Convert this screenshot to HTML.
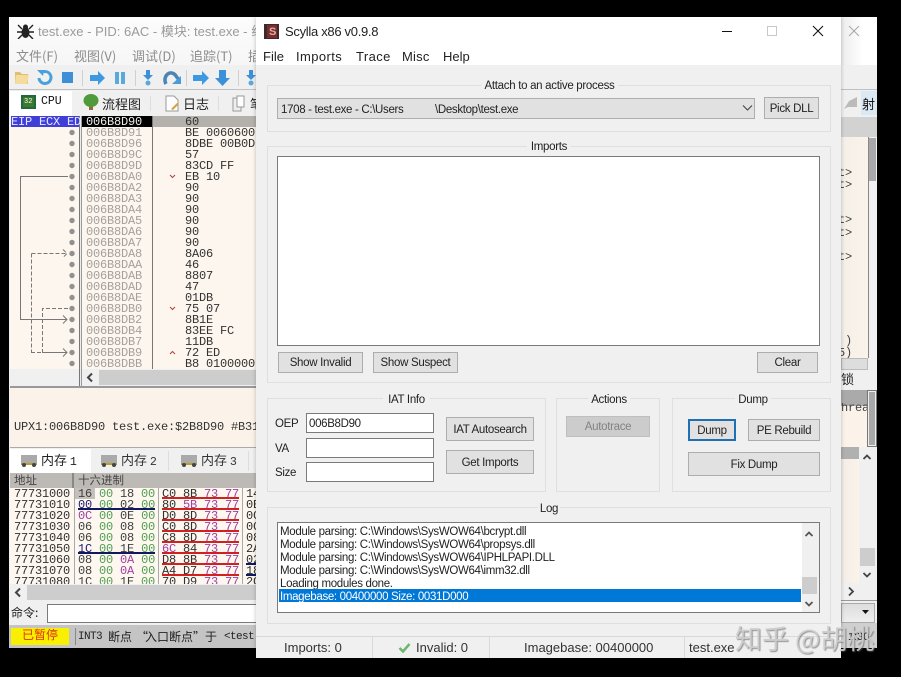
<!DOCTYPE html>
<html><head><meta charset="utf-8">
<style>
html,body{margin:0;padding:0;background:#000;width:901px;height:677px;overflow:hidden}
*{box-sizing:border-box}
div,span.t,svg.a{position:absolute}
.t{position:absolute;white-space:nowrap;height:16px;font:12px/16px "Liberation Sans","Noto Sans CJK SC",sans-serif;color:#222}
.s{font-size:11.5px;letter-spacing:-.33px;margin-top:1px}
.m{font-family:"Liberation Mono","Noto Sans CJK SC",monospace}
pre{position:absolute;margin:0;font:12px/11px "Liberation Mono",monospace;letter-spacing:-.2px;white-space:pre}
.cn{font:13px/16px "Noto Sans CJK SC","Liberation Sans",sans-serif;color:#8c8c8c}
.g{border:1px solid #dfdfdf;position:absolute}
.lb{position:absolute;background:#f0f0f0;padding:0;text-align:center;height:14px;font:11.5px/16px "Liberation Sans",sans-serif;letter-spacing:-.3px;color:#222;white-space:nowrap}
.b{position:absolute;background:#e1e1e1;border:1px solid #adadad;padding-top:1px;text-align:center;font:11.5px/18px "Liberation Sans",sans-serif;letter-spacing:-.3px;color:#222;white-space:nowrap}
.i{position:absolute;background:#fff;border:1px solid #7a7a7a}
.r{position:absolute;height:2px;background:#d02020;left:162px;width:77px}
.n{position:absolute;height:2px;background:#101860;left:78px;width:77px}
.p{color:#a040a0}.e{color:#50a050}.u{color:#202070}
.z{font-family:"Noto Sans CJK SC",sans-serif;font-size:13px}
</style></head>
<body>

<!-- back window -->
<div style="left:9px;top:17px;width:868px;height:631px;background:#f0f0f0;overflow:hidden">
  <div style="left:0;top:0;width:868px;height:48px;background:linear-gradient(#fcfcfc,#f6f6f6)"></div>
  <div style="left:0;top:48px;width:868px;height:25px;background:#f0f0f0;border-bottom:1px solid #c0c0c0"></div>
</div>
<div style="left:841px;top:17px;width:36px;height:48px;background:linear-gradient(90deg,#ececec,#ffffff 60%)"></div>

<!-- bug icon -->
<svg class="a" style="left:17px;top:24px" width="17" height="15" viewBox="0 0 17 15"><ellipse cx="8.5" cy="8.500" rx="4" ry="5.500" fill="#222"/><circle cx="8.500" cy="3" r="2.500" fill="#222"/><path d="M1 1l4 4M16 1l-4 4M0 8h5M17 8h-5M1 15l4-4M16 15l-4-4" stroke="#222" stroke-width="1.400" fill="none"/></svg>
<span class="t" style="left:38px;top:24px;font-size:13px;color:#9a9a9a">test.exe - PID: 6AC - 模块: test.exe - 线</span>
<span class="t cn" style="left:16px;top:48px">文件(F)</span>
<span class="t cn" style="left:74px;top:48px">视图(V)</span>
<span class="t cn" style="left:132px;top:48px">调试(D)</span>
<span class="t cn" style="left:190px;top:48px">追踪(T)</span>
<span class="t cn" style="left:248px;top:48px">插</span>

<!-- toolbar icons -->
<svg class="a" style="left:14px;top:69px" width="242" height="18" viewBox="0 0 242 18">
<path d="M1 3h5l2 2h6v10H1z" fill="#e0c070"/><path d="M2 6h13l-2 9H1z" fill="#f3dc9c"/>
<path d="M25 9a6 6 0 1 0 2-5" stroke="#4aa0dc" stroke-width="3" fill="none"/><path d="M23 1l7 0-1 6z" fill="#4aa0dc"/>
<rect x="48" y="3" width="11" height="11" fill="#3d8fd8"/>
<rect x="68" y="1" width="1" height="16" fill="#d0d0d0"/>
<path d="M76 6h8V2l7 7-7 7v-4h-8z" fill="#3d9ae0"/>
<rect x="101" y="3" width="4" height="12" fill="#5aa8dc"/><rect x="107" y="3" width="4" height="12" fill="#5aa8dc"/>
<rect x="121" y="1" width="1" height="16" fill="#d0d0d0"/>
<path d="M132 1h4v5h3l-5 5-5-5h3z" fill="#3d8fd8"/><circle cx="134" cy="14" r="2.500" fill="#5aa8dc"/>
<path d="M152 15a6 7 0 0 1 10-8l3 4" stroke="#4a85b5" stroke-width="3.500" fill="none"/><path d="M158 15h9v-8z" fill="#4a9ad8"/>
<rect x="172" y="1" width="1" height="16" fill="#d0d0d0"/>
<path d="M179 6h9V2l7 7-7 7v-4h-9z" fill="#3d9ae0"/>
<path d="M205 1h7v8h4l-7.500 8L201 9h4z" fill="#3d8fd8"/>
<rect x="224" y="1" width="1" height="16" fill="#d0d0d0"/>
<path d="M235 1h4v5h3l-5 5-5-5h3z" fill="#3d8fd8"/><circle cx="237" cy="14" r="2.500" fill="#5aa8dc"/>
</svg>

<!-- tabs -->
<div style="left:10px;top:91px;width:62px;height:25px;background:#fff"></div>
<div style="left:21px;top:95px;width:15px;height:14px;background:#3c7a2c;border:2px solid #264;"></div>
<span class="t m" style="left:24px;top:94px;font-size:7px;color:#fff">32</span>
<span class="t m" style="left:41px;top:94px;font-size:11.5px;color:#111;">CPU</span>
<svg class="a" style="left:83px;top:94px" width="16" height="17" viewBox="0 0 16 17"><rect x="6" y="10" width="4" height="6" fill="#9a6a3a"/><ellipse cx="8" cy="6.500" rx="7.500" ry="6.500" fill="#4f9a3a"/></svg>
<span class="t z" style="left:102px;top:96px">流程图</span>
<svg class="a" style="left:165px;top:95px" width="15" height="17" viewBox="0 0 15 17"><path d="M1 1h8l4 4v11H1z" fill="#fff" stroke="#999"/><path d="M6 14l6-6 2 1-6 6z" fill="#d8a040"/></svg>
<span class="t z" style="left:183px;top:96px">日志</span>
<svg class="a" style="left:232px;top:95px" width="15" height="17" viewBox="0 0 15 17"><path d="M1 3h8v13H1z" fill="#eee" stroke="#999"/><path d="M5 1h7v11H5z" fill="#fff" stroke="#999"/></svg>
<span class="t z" style="left:250px;top:96px">笔</span>
<div style="left:150px;top:96px;width:1px;height:15px;background:#ddd"></div>
<div style="left:218px;top:96px;width:1px;height:15px;background:#ddd"></div>

<!-- CPU pane -->
<div style="left:10px;top:116px;width:70px;height:253px;background:#fdf6ee"></div>
<div style="left:79px;top:116px;width:1px;height:270px;background:#777"></div>
<div style="left:80px;top:116px;width:2px;height:270px;background:#ededed"></div>
<div style="left:81px;top:116px;width:1px;height:270px;background:#999"></div>
<div style="left:82px;top:116px;width:175px;height:253px;background:#fdf6ee"></div>
<div style="left:152px;top:116px;width:1px;height:253px;background:#777"></div>
<div style="left:11px;top:116px;width:68px;height:11px;background:#3f3fd8"></div>
<pre style="left:11px;top:117px;color:#e8e8ff">EIP ECX ED</pre>
<div style="left:82px;top:116px;width:70px;height:11px;background:#000"></div>
<div style="left:153px;top:116px;width:104px;height:11px;background:#b4b0ac"></div>
<pre style="left:86px;top:117px;color:#a4a09c"><span style="color:#eee">006B8D90</span>
006B8D91
006B8D96
006B8D9C
006B8D9D
006B8DA0
006B8DA2
006B8DA3
006B8DA4
006B8DA5
006B8DA6
006B8DA7
006B8DA8
006B8DAA
006B8DAB
006B8DAD
006B8DAE
006B8DB0
006B8DB2
006B8DB4
006B8DB7
006B8DB9
006B8DBB</pre>
<pre style="left:185px;top:117px;color:#333;width:71px;overflow:hidden;height:252px">60
BE 0060600
8DBE 00B0D
57
83CD FF
EB 10
90
90
90
90
90
90
8A06
46
8807
47
01DB
75 07
8B1E
83EE FC
11DB
72 ED
B8 0100000</pre>
<svg class="a" style="left:169px;top:174px" width="7" height="5"><path d="M1 1l2.500 2.500L6 1" stroke="#b04040" fill="none"/></svg>
<svg class="a" style="left:169px;top:306px" width="7" height="5"><path d="M1 1l2.500 2.500L6 1" stroke="#b04040" fill="none"/></svg>
<svg class="a" style="left:169px;top:350px" width="7" height="5"><path d="M1 4l2.500-2.500L6 4" stroke="#b04040" fill="none"/></svg>
<!-- dots and arrows -->
<svg class="a" style="left:10px;top:116px" width="70" height="253" viewBox="0 0 70 253">
<g fill="#919191"><circle cx="62" cy="16.500" r="2.700"/><circle cx="62" cy="27.500" r="2.700"/><circle cx="62" cy="38.500" r="2.700"/><circle cx="62" cy="49.500" r="2.700"/><circle cx="62" cy="60.500" r="2.700"/><circle cx="62" cy="71.500" r="2.700"/><circle cx="62" cy="82.500" r="2.700"/><circle cx="62" cy="93.500" r="2.700"/><circle cx="62" cy="104.500" r="2.700"/><circle cx="62" cy="115.500" r="2.700"/><circle cx="62" cy="126.500" r="2.700"/><circle cx="62" cy="137.500" r="2.700"/><circle cx="62" cy="148.500" r="2.700"/><circle cx="62" cy="159.500" r="2.700"/><circle cx="62" cy="170.500" r="2.700"/><circle cx="62" cy="181.500" r="2.700"/><circle cx="62" cy="192.500" r="2.700"/><circle cx="62" cy="203.500" r="2.700"/><circle cx="62" cy="214.500" r="2.700"/><circle cx="62" cy="225.500" r="2.700"/><circle cx="62" cy="236.500" r="2.700"/><circle cx="62" cy="247.500" r="2.700"/></g>
<g fill="none" stroke="#777" stroke-width="1">
<path d="M58 60.500H10.500V203.500H57M53 199.500l4 4-4 4"/>
<path d="M21.500 137.500H57M53 133.500l4 4-4 4" stroke-dasharray="4 2"/>
<path d="M21.500 137.500V236.500" stroke-dasharray="4 2"/>
<path d="M58 192.500H32.500V236" stroke-dasharray="4 2"/>
<path d="M21 236.500H32" stroke-dasharray="4 2"/>
<path d="M32 236.500H57M53 232.500l4 4-4 4"/>
</g></svg>
<!-- CPU hscroll -->
<div style="left:82px;top:369px;width:175px;height:17px;background:#f0f0f0"></div>
<div style="left:99px;top:370px;width:158px;height:15px;background:#cdcdcd"></div>
<svg class="a" style="left:85px;top:372px" width="10" height="11"><path d="M7 1.500L3 5.500l4 4" stroke="#444" stroke-width="2" fill="none"/></svg>
<div style="left:10px;top:386px;width:247px;height:2px;background:#999"></div>

<!-- info pane -->
<div style="left:10px;top:388px;width:247px;height:60px;background:#fbf3ea"></div>
<pre style="left:14px;top:422px;color:#333;width:243px;overflow:hidden">UPX1:006B8D90 test.exe:$2B8D90 #B31</pre>
<div style="left:10px;top:447px;width:247px;height:1px;background:#aaa"></div>

<!-- memory tabs -->
<div style="left:10px;top:449px;width:81px;height:24px;background:#fff"></div>
<svg class="a" style="left:21px;top:454px" width="16" height="13" viewBox="0 0 16 13"><rect y="1" width="16" height="8" fill="#aaa"/><rect y="9" width="16" height="2" fill="#b8a030"/><circle cx="3" cy="11" r="2" fill="#444"/><circle cx="13" cy="11" r="2" fill="#444"/></svg>
<span class="t z" style="left:41px;top:452px">内存 <span style="font:11.670px 'Liberation Mono'">1</span></span>
<svg class="a" style="left:101px;top:454px" width="16" height="13" viewBox="0 0 16 13"><rect y="1" width="16" height="8" fill="#aaa"/><rect y="9" width="16" height="2" fill="#b8a030"/><circle cx="3" cy="11" r="2" fill="#444"/><circle cx="13" cy="11" r="2" fill="#444"/></svg>
<span class="t z" style="left:121px;top:452px;color:#333">内存 <span style="font:11.670px 'Liberation Mono'">2</span></span>
<svg class="a" style="left:181px;top:454px" width="16" height="13" viewBox="0 0 16 13"><rect y="1" width="16" height="8" fill="#aaa"/><rect y="9" width="16" height="2" fill="#b8a030"/><circle cx="3" cy="11" r="2" fill="#444"/><circle cx="13" cy="11" r="2" fill="#444"/></svg>
<span class="t z" style="left:201px;top:452px;color:#333">内存 <span style="font:11.670px 'Liberation Mono'">3</span></span>
<div style="left:168px;top:451px;width:1px;height:20px;background:#ddd"></div>
<div style="left:248px;top:451px;width:1px;height:20px;background:#ddd"></div>

<!-- dump header -->
<div style="left:10px;top:473px;width:247px;height:15px;background:#bdbab6"></div>
<div style="left:72px;top:473px;width:2px;height:15px;background:#888"></div>
<span class="t z" style="left:14px;top:472px;font-size:11.5px;color:#444">地址</span>
<span class="t z" style="left:78px;top:472px;font-size:11.5px;color:#444">十六进制</span>
<!-- dump rows -->
<div style="left:10px;top:488px;width:247px;height:96px;background:#fdf7f0;overflow:hidden">
<div style="left:64px;top:0;width:1px;height:96px;background:#aaa"></div>
<div style="left:148px;top:0;width:1px;height:96px;background:#aaa"></div>
<div style="left:232px;top:0;width:1px;height:96px;background:#aaa"></div>
<div style="left:65px;top:0;width:20px;height:11px;background:#c4c0bc"></div>
<pre style="left:4px;top:1px;color:#333">77731000
77731010
77731020
77731030
77731040
77731050
77731060
77731070
77731080</pre>
<pre style="left:68px;top:1px;color:#404040">16 <span class="e">00</span> 18 <span class="e">00</span>
<span class="u">00</span> <span class="e">00</span> 02 <span class="e">00</span>
<span class="p">0C</span> <span class="e">00</span> 0E <span class="e">00</span>
06 <span class="e">00</span> 08 <span class="e">00</span>
06 <span class="e">00</span> 08 <span class="e">00</span>
<span class="u">1C</span> <span class="e">00</span> 1E <span class="e">00</span>
08 <span class="e">00</span> <span class="p">0A</span> <span class="e">00</span>
08 <span class="e">00</span> <span class="p">0A</span> <span class="e">00</span>
1C <span class="e">00</span> 1E <span class="e">00</span></pre>
<pre style="left:152px;top:1px;color:#303030">C0 8B <span class="p">73 77</span>
80 <span class="p">5B 73 77</span>
D0 8D <span class="p">73 77</span>
C0 8D <span class="p">73 77</span>
C8 8D <span class="p">73 77</span>
<span class="p">6C</span> 84 <span class="p">73 77</span>
D8 8B <span class="p">73 77</span>
A4 D7 <span class="p">73 77</span>
70 D9 <span class="p">73 77</span></pre>
<pre style="left:236px;top:1px;color:#303030">14
0E
0C
0C
08
2A
02
18
2C</pre>
</div>
<div class="r" style="top:497px"></div><div class="r" style="top:508px"></div><div class="r" style="top:519px"></div><div class="r" style="top:530px"></div><div class="r" style="top:541px"></div><div class="r" style="top:552px"></div><div class="r" style="top:563px"></div><div class="r" style="top:574px"></div>
<div class="n" style="top:508px"></div><div class="n" style="top:552px"></div>
<div class="n" style="top:563px;left:246px;width:10px"></div><div class="n" style="top:574px;left:246px;width:10px"></div>
<!-- dump hscroll -->
<div style="left:10px;top:584px;width:247px;height:17px;background:#f0f0f0"></div>
<div style="left:27px;top:585px;width:230px;height:15px;background:#cdcdcd"></div>
<svg class="a" style="left:13px;top:587px" width="10" height="11"><path d="M7 1.500L3 5.500l4 4" stroke="#444" stroke-width="2" fill="none"/></svg>
<!-- command -->
<div style="left:10px;top:601px;width:247px;height:25px;background:#f0f0f0"></div>
<span class="t z" style="left:11px;top:605px;font-size:12px">命令:</span>
<div class="i" style="left:47px;top:604px;width:210px;height:19px"></div>
<!-- status -->
<div style="left:9px;top:625px;width:248px;height:23px;background:#c4c4c4"></div>
<div style="left:11px;top:628px;width:58px;height:17px;background:#f8f000"></div>
<span class="t z" style="left:22px;top:627px;font-size:12px;color:#e03010">已暂停</span>
<div style="left:75px;top:628px;width:1px;height:17px;background:#888"></div>
<span class="t m" style="left:78px;top:629px;font-size:11px;letter-spacing:-.6px">INT3</span>
<span class="t z" style="left:108px;top:629px;font-size:12px">断点</span>
<span class="t z" style="left:136px;top:629px;font-size:12px">“</span>
<span class="t z" style="left:145px;top:629px;font-size:12px">入口断点</span>
<span class="t z" style="left:193px;top:629px;font-size:12px">”</span>
<span class="t z" style="left:205px;top:629px;font-size:12px">于</span>
<span class="t m" style="left:224px;top:629px;font-size:11px;letter-spacing:-.6px">&lt;test.</span>

<!-- right side pieces -->
<svg class="a" style="left:848px;top:25px" width="12" height="12"><path d="M1 1l10 10M11 1L1 11" stroke="#aaa" stroke-width="1.100"/></svg>
<div style="left:841px;top:91px;width:36px;height:25px;background:#f0f0f0"></div>
<svg class="a" style="left:843px;top:96px" width="15" height="14"><path d="M1 13L6 5l8-4v10H5z" fill="#bbb"/></svg>
<div style="left:861px;top:91px;width:16px;height:24px;background:#dbe9f5"></div>
<span class="t z" style="left:862px;top:96px;color:#111;width:15px;overflow:hidden">射</span>
<div style="left:841px;top:117px;width:36px;height:20px;background:#d2d2d2"></div>
<div style="left:841px;top:137px;width:27px;height:221px;background:linear-gradient(90deg,#f4efe8,#fbf3ea)"></div>
<div style="left:868px;top:137px;width:9px;height:221px;background:#f0f0f0;border-left:1px solid #888"></div>
<div style="left:869px;top:138px;width:7px;height:43px;background:#a8a8a8"></div>
<pre style="left:838px;top:168px;color:#444">t&gt;</pre>
<pre style="left:838px;top:180px;color:#444">t&gt;</pre>
<pre style="left:838px;top:215px;color:#444">t&gt;</pre>
<pre style="left:838px;top:228px;color:#444">t&gt;</pre>
<pre style="left:838px;top:252px;color:#444">t&gt;</pre>
<pre style="left:838px;top:336px;color:#444"> )</pre>
<pre style="left:838px;top:348px;color:#444">5)</pre>
<div style="left:841px;top:358px;width:27px;height:12px;background:#ddd;border:1px solid #bbb"></div>
<div style="left:841px;top:370px;width:36px;height:20px;background:#f0f0f0"></div>
<span class="t z" style="left:841px;top:371px">锁</span>
<div style="left:841px;top:390px;width:27px;height:16px;background:#aaa"></div>
<div style="left:841px;top:406px;width:27px;height:41px;background:#fbf3ea"></div>
<pre style="left:841px;top:403px;color:#444;width:26px;overflow:hidden">hrea</pre>
<div style="left:867px;top:390px;width:10px;height:57px;background:#a8a8a8;border:1px solid #777;outline:1px solid #eee;outline-offset:-2px"></div>
<div style="left:841px;top:447px;width:36px;height:144px;background:#f0f0f0"></div>
<div style="left:841px;top:447px;width:18px;height:12px;background:#b0b0b0"></div>
<div style="left:841px;top:459px;width:18px;height:124px;background:linear-gradient(90deg,#f2ede6,#fbf3ea)"></div>
<svg class="a" style="left:862px;top:453px" width="10" height="8"><path d="M1.500 6L5 2.500 8.500 6" stroke="#444" stroke-width="1.800" fill="none"/></svg>
<div style="left:860px;top:548px;width:15px;height:18px;background:#cdcdcd"></div>
<svg class="a" style="left:862px;top:571px" width="10" height="8"><path d="M1.500 2L5 5.500 8.500 2" stroke="#444" stroke-width="1.800" fill="none"/></svg>
<svg class="a" style="left:846px;top:586px" width="10" height="11"><path d="M3 1.500L7 5.500l-4 4" stroke="#444" stroke-width="1.800" fill="none"/></svg>
<div style="left:841px;top:600px;width:36px;height:1px;background:#999"></div>
<div style="left:841px;top:603px;width:34px;height:20px;background:linear-gradient(#ddd,#eee);border:1px solid #aaa"></div>
<svg class="a" style="left:861px;top:609px" width="9" height="6"><path d="M1 1h7L4.500 5z" fill="#111"/></svg>
<div style="left:841px;top:623px;width:36px;height:25px;background:#d0d0d0"></div>
<span class="t" style="left:848px;top:629px;font-size:11px;color:#111">1:30</span>

<!-- Scylla window -->
<div style="left:256px;top:17px;width:585px;height:641px;background:#f0f0f0;box-shadow:0 0 4px rgba(0,0,0,.25)">
  <div style="left:0;top:0;width:585px;height:48px;background:#fff"></div>
</div>
<div style="left:264px;top:24px;width:15px;height:15px;background:#3a2a2a"></div>
<div style="left:267px;top:25px;width:10px;height:13px;background:#7a2c30"></div>
<span class="t" style="left:269px;top:24px;font-size:11px;color:#e0b0a8;font-weight:bold">S</span>
<span class="t" style="left:285px;top:24px;font-size:13px;letter-spacing:-.3px">Scylla x86 v0.9.8</span>
<span class="t" style="left:263px;top:49px;font-size:13px">File</span>
<span class="t" style="left:296px;top:49px;font-size:13px;letter-spacing:.4px">Imports</span>
<span class="t" style="left:356px;top:49px;font-size:13px;letter-spacing:.4px">Trace</span>
<span class="t" style="left:402px;top:49px;font-size:13px;letter-spacing:.2px">Misc</span>
<span class="t" style="left:443px;top:49px;font-size:13px">Help</span>
<div style="left:722px;top:31px;width:10px;height:1px;background:#111"></div>
<div style="left:767px;top:26px;width:10px;height:10px;border:1px solid #c8c8c8"></div>
<svg class="a" style="left:812px;top:25px" width="12" height="12"><path d="M1 1l10 10M11 1L1 11" stroke="#111" stroke-width="1.100"/></svg>

<!-- Attach group -->
<div class="g" style="left:267px;top:85px;width:564px;height:47px"></div>
<div class="lb" style="left:481px;top:78px;width:137px">Attach to an active process</div>
<div style="left:277px;top:98px;width:478px;height:21px;background:#e1e1e1;border:1px solid #adadad"></div>
<span class="t s" style="left:281px;top:101px">1708 - test.exe - C:\Users</span>
<span class="t s" style="left:435px;top:101px">\Desktop\test.exe</span>
<svg class="a" style="left:742px;top:104px" width="11" height="8"><path d="M1 1.500L5.500 6 10 1.500" stroke="#444" stroke-width="1.100" fill="none"/></svg>
<div class="b" style="left:764px;top:97px;width:55px;height:22px;line-height:20px">Pick DLL</div>

<!-- Imports group -->
<div class="g" style="left:267px;top:146px;width:564px;height:237px"></div>
<div class="lb" style="left:527px;top:139px;width:44px">Imports</div>
<div class="i" style="left:277px;top:156px;width:543px;height:190px"></div>
<div class="b" style="left:278px;top:352px;width:85px;height:21px">Show Invalid</div>
<div class="b" style="left:373px;top:352px;width:85px;height:21px">Show Suspect</div>
<div class="b" style="left:757px;top:352px;width:61px;height:21px">Clear</div>

<!-- IAT info -->
<div class="g" style="left:267px;top:398px;width:279px;height:94px"></div>
<div class="lb" style="left:383px;top:392px;width:47px">IAT Info</div>
<span class="t s" style="left:275px;top:415px">OEP</span>
<span class="t s" style="left:275px;top:440px">VA</span>
<span class="t s" style="left:275px;top:464px">Size</span>
<div class="i" style="left:306px;top:413px;width:128px;height:20px"></div>
<span class="t s" style="left:309px;top:415px">006B8D90</span>
<div class="i" style="left:306px;top:438px;width:128px;height:20px"></div>
<div class="i" style="left:306px;top:462px;width:128px;height:20px"></div>
<div class="b" style="left:446px;top:417px;width:88px;height:24px;line-height:22px">IAT Autosearch</div>
<div class="b" style="left:446px;top:450px;width:88px;height:24px;line-height:22px">Get Imports</div>

<!-- Actions -->
<div class="g" style="left:556px;top:398px;width:104px;height:94px"></div>
<div class="lb" style="left:588px;top:392px;width:42px">Actions</div>
<div class="b" style="left:566px;top:416px;width:84px;height:21px;background:#cccccc;border-color:#bfbfbf;color:#838383">Autotrace</div>

<!-- Dump -->
<div class="g" style="left:672px;top:398px;width:159px;height:94px"></div>
<div class="lb" style="left:735px;top:392px;width:36px">Dump</div>
<div class="b" style="left:688px;top:419px;width:48px;height:22px;border:2px solid #1f6fb2;line-height:19px">Dump</div>
<div class="b" style="left:748px;top:419px;width:72px;height:22px;line-height:20px">PE Rebuild</div>
<div class="b" style="left:688px;top:452px;width:132px;height:24px;line-height:22px">Fix Dump</div>

<!-- Log -->
<div class="g" style="left:267px;top:507px;width:564px;height:117px"></div>
<div class="lb" style="left:538px;top:501px;width:22px">Log</div>
<div class="i" style="left:277px;top:522px;width:543px;height:91px"></div>
<span class="t s" style="left:280px;top:523px">Module parsing: C:\Windows\SysWOW64\bcrypt.dll</span>
<span class="t s" style="left:280px;top:536px">Module parsing: C:\Windows\SysWOW64\propsys.dll</span>
<span class="t s" style="left:280px;top:549px">Module parsing: C:\Windows\SysWOW64\IPHLPAPI.DLL</span>
<span class="t s" style="left:280px;top:562px">Module parsing: C:\Windows\SysWOW64\imm32.dll</span>
<span class="t s" style="left:280px;top:575px">Loading modules done.</span>
<div style="left:279px;top:589px;width:522px;height:13px;background:#0078d7"></div>
<span class="t s" style="left:280px;top:588px;color:#fff">Imagebase: 00400000 Size: 0031D000</span>
<div style="left:802px;top:523px;width:17px;height:89px;background:#f0f0f0"></div>
<svg class="a" style="left:804px;top:530px" width="10" height="8"><path d="M1.500 6L5 2.500 8.500 6" stroke="#555" stroke-width="1.800" fill="none"/></svg>
<div style="left:802px;top:577px;width:15px;height:17px;background:#cdcdcd"></div>
<svg class="a" style="left:804px;top:600px" width="10" height="8"><path d="M1.500 2L5 5.500 8.500 2" stroke="#555" stroke-width="1.800" fill="none"/></svg>

<!-- status bar -->
<div style="left:256px;top:636px;width:585px;height:1px;background:#d9d9d9"></div>
<div style="left:372px;top:637px;width:1px;height:21px;background:#d9d9d9"></div>
<div style="left:489px;top:637px;width:1px;height:21px;background:#d9d9d9"></div>
<div style="left:684px;top:637px;width:1px;height:21px;background:#d9d9d9"></div>
<span class="t" style="left:284px;top:640px;font-size:13px;color:#333">Imports: 0</span>
<svg class="a" style="left:398px;top:642px" width="13" height="11"><path d="M1.500 6L5 9.500 11.500 2" stroke="#6cb86c" stroke-width="2.500" fill="none"/></svg>
<span class="t" style="left:416px;top:640px;font-size:13px;color:#333">Invalid: 0</span>
<span class="t" style="left:524px;top:640px;font-size:13px;color:#333">Imagebase: 00400000</span>
<span class="t" style="left:689px;top:640px;font-size:13px;color:#333">test.exe</span>

<!-- watermark -->
<span class="t" style="left:735px;top:621px;height:34px;font:27px/34px 'Noto Sans CJK SC','Liberation Sans',sans-serif;color:rgba(205,205,205,.92);text-shadow:1px 1px 1px rgba(90,90,90,.6)">知乎 @胡桃</span>
</body></html>
